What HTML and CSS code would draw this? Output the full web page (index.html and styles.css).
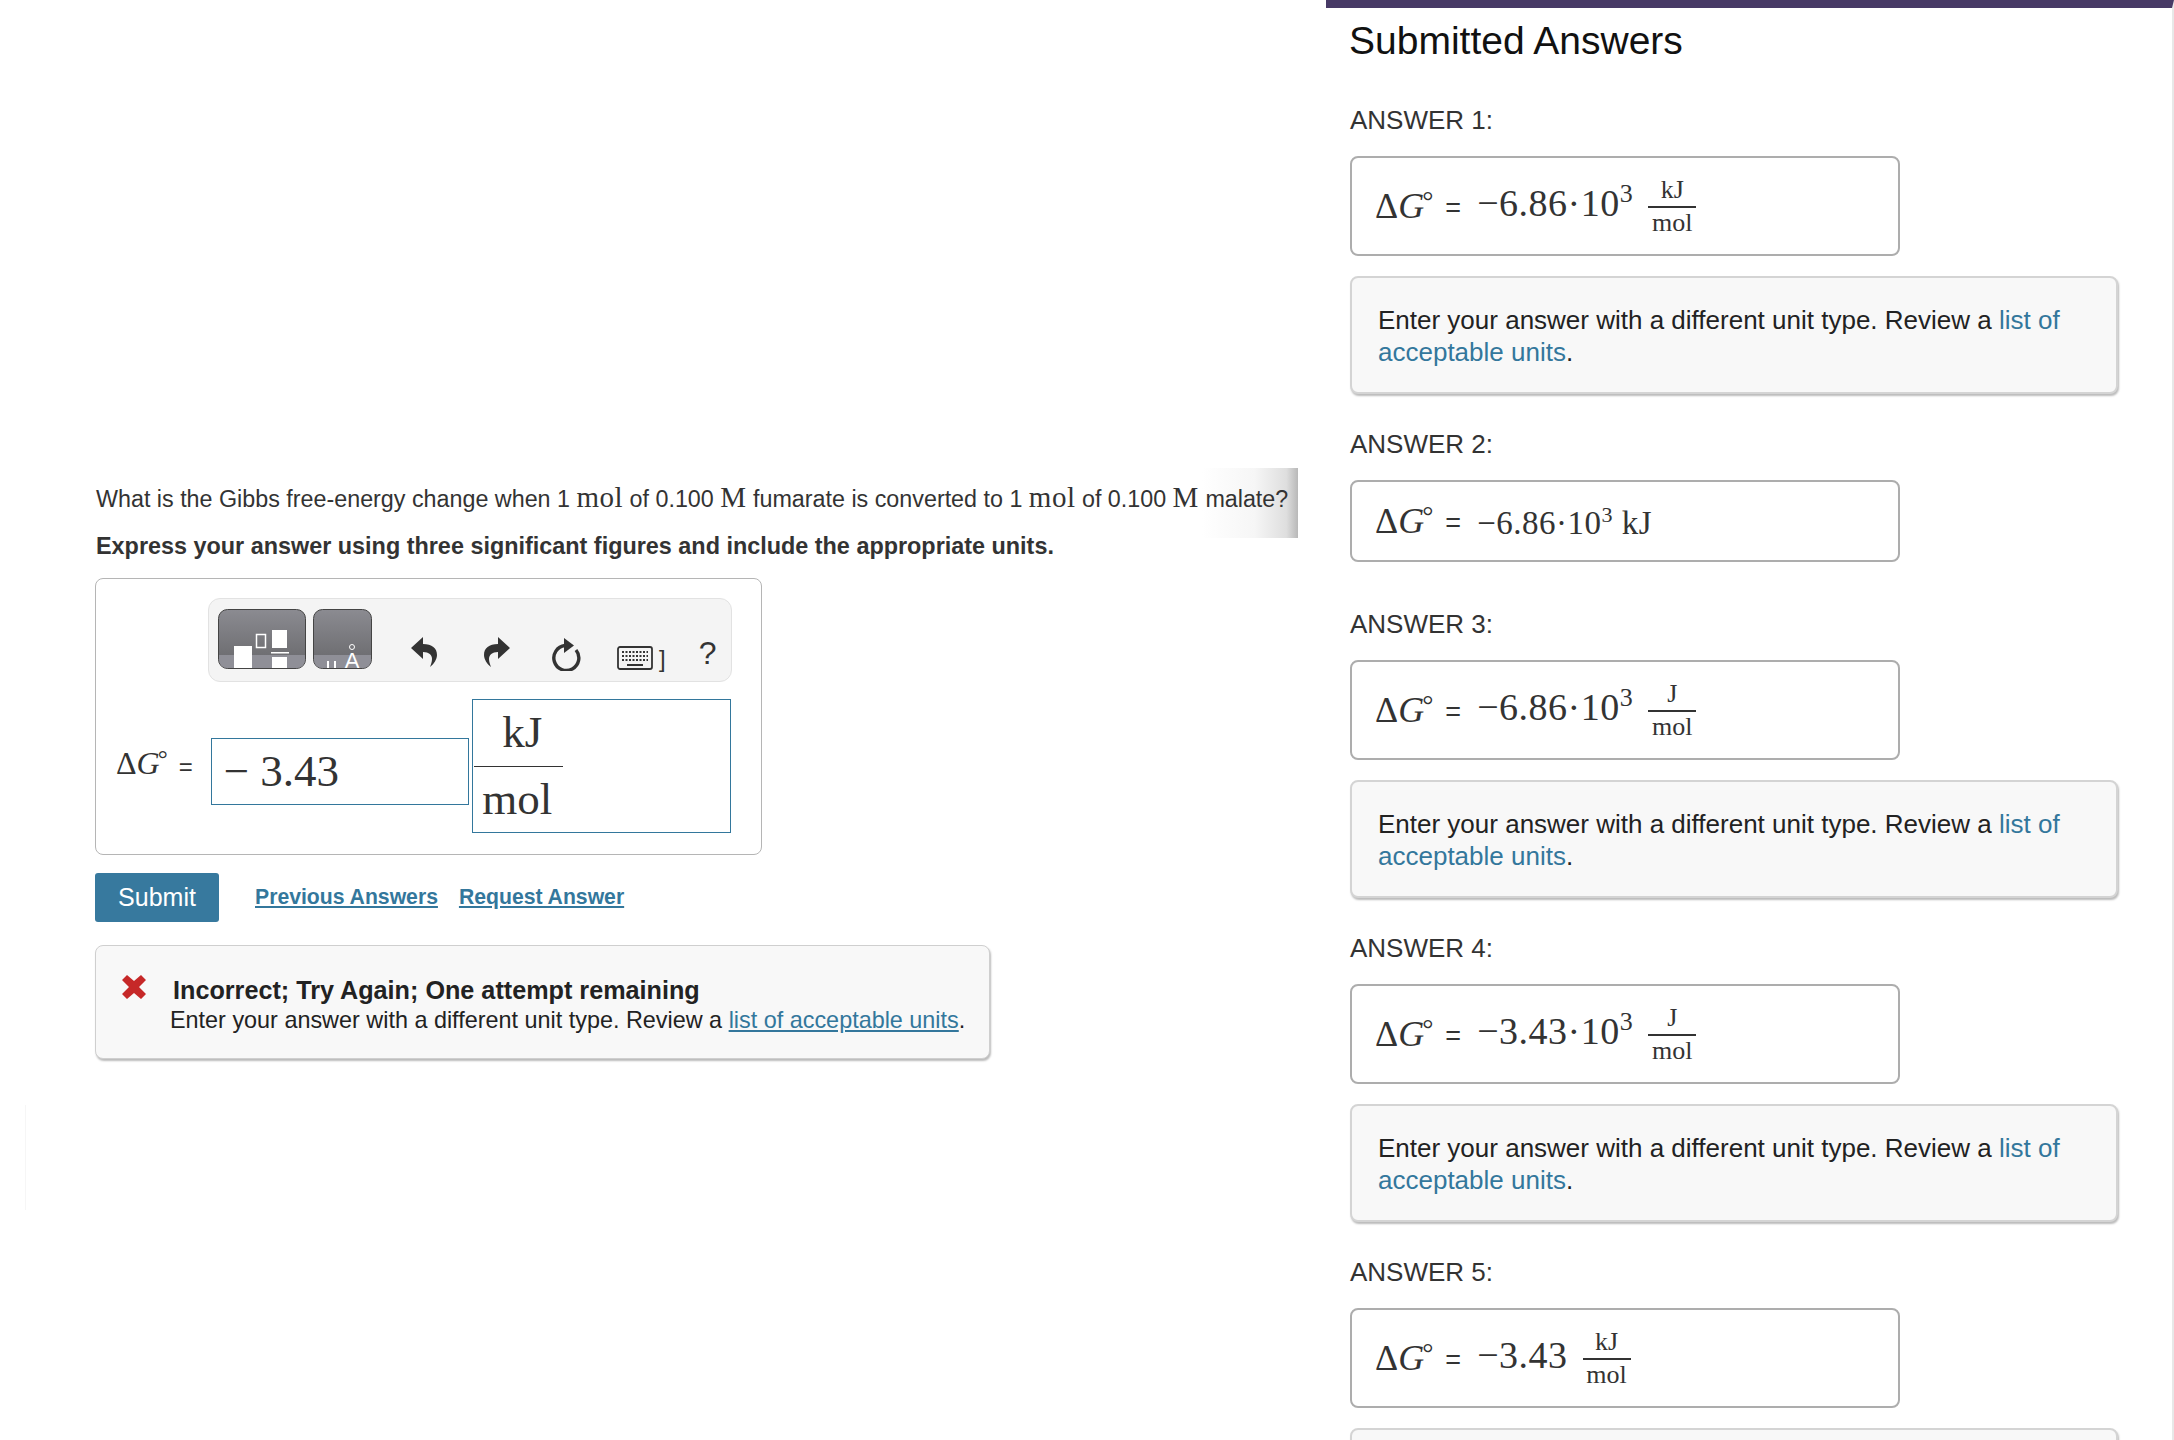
FILE: index.html
```html
<!DOCTYPE html>
<html lang="en">
<head>
  <meta charset="UTF-8">
  <meta name="viewport" content="width=device-width, initial-scale=1.0">
  <title>Submitted Answers</title>
  <link rel="stylesheet" href="styles.css">
</head>
<body>
  <div class="layout">
    <main class="problem">
      <div class="question-wrap">
        <span class="fade"></span>
        <p class="question">What is the Gibbs free-energy change when 1 <span class="unit">mol</span> of 0.100 <span class="unit">M</span> fumarate is converted to 1 <span class="unit">mol</span> of 0.100 <span class="unit">M</span> malate?</p>
      </div>
      <p class="instructions">Express your answer using three significant figures and include the appropriate units.</p>

      <div class="answer-panel">
        <div class="toolbar">
          <svg class="tpl tpl-wide" viewBox="0 0 88 60">
            <defs>
              <linearGradient id="tplGrad" x1="0" y1="0" x2="0" y2="1">
                <stop offset="0" stop-color="#8b8b91"/>
                <stop offset="1" stop-color="#67676a"/>
              </linearGradient>
            </defs>
            <rect x="0.5" y="0.5" width="87" height="59" rx="9" fill="url(#tplGrad)" stroke="#444"/>
            <path d="M1 46h86v5a8 8 0 0 1-8 8H9a8 8 0 0 1-8-8z" fill="#8f8f97"/>
            <rect x="16" y="37" width="18" height="22" fill="#fff"/>
            <rect x="38.500" y="25.500" width="9" height="13" fill="none" stroke="#fff" stroke-width="1.500"/>
            <rect x="54" y="21" width="15" height="18" fill="#fff"/>
            <rect x="53" y="43" width="18" height="1.500" fill="#fff"/>
            <rect x="54" y="48" width="15" height="11" fill="#fff"/>
          </svg>
          <svg class="tpl tpl-narrow" viewBox="0 0 59 60">
            <rect x="0.5" y="0.5" width="58" height="59" rx="9" fill="url(#tplGrad)" stroke="#444"/>
            <path d="M1 46h57v5a8 8 0 0 1-8 8H9a8 8 0 0 1-8-8z" fill="#8f8f97"/>
            <circle cx="39" cy="38" r="2.500" fill="none" stroke="#fff"/>
            <rect x="14" y="52" width="2" height="7" fill="#fff"/>
            <rect x="21" y="52" width="2" height="7" fill="#fff"/>
            <text x="39" y="59" text-anchor="middle" class="tpl-letter">A</text>
          </svg>
          <svg class="tool tool-undo" viewBox="0 0 26 30"><path d="M12 0 0 11l12 11v-7c6 0 9 3 9 7 0 3-1 5-2 8 4-3 7-8 7-12 0-7-5-11-14-11z" fill="#333"/></svg>
          <svg class="tool tool-redo" viewBox="0 0 26 30"><path d="M14 0l12 11-12 11v-7c-6 0-9 3-9 7 0 3 1 5 2 8-4-3-7-8-7-12 0-7 5-11 14-11z" fill="#333"/></svg>
          <svg class="tool tool-reset" viewBox="0 0 32 34"><path d="M26 13A12.500 12.500 0 1 1 15 8.500" fill="none" stroke="#333" stroke-width="3.400"/><path d="M14 1l10 7.500L14 16z" fill="#333"/></svg>
          <svg class="tool tool-keys" viewBox="0 0 36 24">
            <rect x="1" y="1" width="34" height="22" rx="2" fill="#f4f4f4" stroke="#333" stroke-width="1.800"/>
            <path d="M5 6h26M5 10h26M5 14h26" stroke="#333" stroke-width="2" stroke-dasharray="2 1.500"/>
            <path d="M10 19h16" stroke="#333" stroke-width="2"/>
          </svg>
          <span class="tool-bracket">]</span>
          <span class="tool-help">?</span>
        </div>
        <div class="entry-row">
          <span class="symbol"><span>&Delta;</span><i>G</i><sup>&deg;</sup></span>
          <span class="equals">=</span>
          <div class="entry-value">&minus; 3.43</div>
          <div class="entry-units">
            <div class="units-frac">
              <span class="units-top">kJ</span>
              <span class="units-bottom">mol</span>
            </div>
          </div>
        </div>
      </div>

      <div class="actions">
        <button class="submit">Submit</button>
        <a class="action-link" href="#">Previous Answers</a>
        <a class="action-link" href="#">Request Answer</a>
      </div>

      <div class="result">
        <svg class="result-icon" viewBox="0 0 26 24"><path d="M1 5 6 0l7 6 7-6 5 5-7 7 7 7-5 5-7-6-7 6-5-5 7-7z" fill="#c62828"/></svg>
        <div class="result-text">
          <div class="result-title">Incorrect; Try Again; One attempt remaining</div>
          <div class="result-body">Enter your answer with a different unit type. Review a <a href="#">list of acceptable units</a>.</div>
        </div>
      </div>
      <span class="edge-mark"></span>
    </main>

    <aside class="submitted">
      <h1>Submitted Answers</h1>

      <section class="answer">
        <h2>ANSWER 1:</h2>
        <div class="answer-box">
          <span class="symbol"><span>&Delta;</span><i>G</i><sup>&deg;</sup></span><span class="equals">=</span>
          <span class="value">&minus;6.86&middot;10<sup>3</sup></span>
          <span class="frac"><span>kJ</span><span>mol</span></span>
        </div>
        <div class="feedback">Enter your answer with a different unit type. Review a <a href="#">list of acceptable units</a>.</div>
      </section>

      <section class="answer">
        <h2>ANSWER 2:</h2>
        <div class="answer-box box-short">
          <span class="symbol"><span>&Delta;</span><i>G</i><sup>&deg;</sup></span><span class="equals">=</span>
          <span class="value value-small">&minus;6.86&middot;10<sup>3</sup> kJ</span>
        </div>
      </section>

      <section class="answer">
        <h2>ANSWER 3:</h2>
        <div class="answer-box">
          <span class="symbol"><span>&Delta;</span><i>G</i><sup>&deg;</sup></span><span class="equals">=</span>
          <span class="value">&minus;6.86&middot;10<sup>3</sup></span>
          <span class="frac"><span>J</span><span>mol</span></span>
        </div>
        <div class="feedback">Enter your answer with a different unit type. Review a <a href="#">list of acceptable units</a>.</div>
      </section>

      <section class="answer">
        <h2>ANSWER 4:</h2>
        <div class="answer-box">
          <span class="symbol"><span>&Delta;</span><i>G</i><sup>&deg;</sup></span><span class="equals">=</span>
          <span class="value">&minus;3.43&middot;10<sup>3</sup></span>
          <span class="frac"><span>J</span><span>mol</span></span>
        </div>
        <div class="feedback">Enter your answer with a different unit type. Review a <a href="#">list of acceptable units</a>.</div>
      </section>

      <section class="answer">
        <h2>ANSWER 5:</h2>
        <div class="answer-box">
          <span class="symbol"><span>&Delta;</span><i>G</i><sup>&deg;</sup></span><span class="equals">=</span>
          <span class="value">&minus;3.43</span>
          <span class="frac"><span>kJ</span><span>mol</span></span>
        </div>
        <div class="feedback">Enter your answer with a different unit type. Review a <a href="#">list of acceptable units</a>.</div>
      </section>
    </aside>
  </div>
</body>
</html>
```

FILE: styles.css
```css
html, body {
  margin: 0;
  height: 100%;
  overflow: hidden;
}

body {
  font-family: "Liberation Sans", Arial, sans-serif;
  color: #333;
  background-color: #fff;
}

a {
  color: #33779c;
}

.layout {
  display: flex;
  height: 1440px;
}

/* left column */

.problem {
  position: relative;
  box-sizing: border-box;
  width: 1326px;
  padding: 468px 0 0 96px;
}

.question-wrap {
  position: relative;
  height: 70px;
  display: flex;
  align-items: center;
}

.fade {
  position: absolute;
  left: 1106px;
  top: 0;
  width: 96px;
  height: 70px;
  background: linear-gradient(to right, #fff, #f6f6f6 55%, #dedede 88%, #b8b8b8);
}

.question {
  position: relative;
  margin: 0;
  font-size: 23.300px;
  white-space: nowrap;
  line-height: 30px;
  top: -5px;
}

.unit {
  font-family: "Liberation Serif", serif;
  font-size: 29px;
  letter-spacing: 0.5px;
}

.instructions {
  margin: -7px 0 0;
  font-size: 23.400px;
  line-height: 30px;
  font-weight: bold;
}

.answer-panel {
  box-sizing: border-box;
  width: 667px;
  height: 277px;
  margin: 17px 0 0 -1px;
  padding: 19px 30px 0 20px;
  border: 1px solid #b5b5b5;
  border-radius: 8px;
}

.toolbar {
  display: flex;
  align-items: flex-start;
  box-sizing: border-box;
  width: 524px;
  height: 84px;
  margin-left: 92px;
  padding: 10px 0 0 9px;
  background-color: #f4f4f4;
  border: 1px solid #e2e2e2;
  border-radius: 12px;
}

.tpl {
  display: block;
  height: 60px;
}

.tpl-wide {
  width: 88px;
}

.tpl-narrow {
  width: 59px;
  margin-left: 7px;
}

.tpl-letter {
  font-family: "Liberation Sans", sans-serif;
  font-size: 22px;
  fill: #fff;
}

.tool {
  display: block;
}

.tool-undo {
  width: 26px;
  height: 30px;
  margin: 28px 0 0 39px;
}

.tool-redo {
  width: 26px;
  height: 30px;
  margin: 28px 0 0 47px;
}

.tool-reset {
  width: 32px;
  height: 34px;
  margin: 28px 0 0 40px;
}

.tool-keys {
  width: 36px;
  height: 24px;
  margin: 37px 0 0 35px;
}

.tool-bracket {
  margin: 35px 0 0 6px;
  font-size: 24px;
  line-height: 30px;
}

.tool-help {
  margin: 26px 0 0 33px;
  font-size: 32px;
  line-height: 36px;
}

.entry-row {
  display: flex;
  align-items: center;
  margin-top: 17px;
  height: 134px;
}

.symbol {
  font-family: "Liberation Serif", serif;
  font-size: 36px;
  color: #333;
  white-space: nowrap;
}

.symbol sup {
  font-size: 28px;
  line-height: 0;
  vertical-align: 8px;
  margin-left: -2px;
}

.equals {
  font-size: 27px;
  margin: 4px 0 0 12px;
}

.entry-row .symbol {
  position: relative;
  top: -3px;
  font-size: 32px;
}

.entry-row .symbol sup {
  font-size: 25px;
  vertical-align: 7px;
}

.entry-row .equals {
  position: relative;
  top: 1px;
  font-size: 24px;
  margin: 0 0 0 11px;
}

.entry-value {
  box-sizing: border-box;
  width: 259px;
  height: 67px;
  margin: 10px 0 0 18px;
  padding-left: 12px;
  border: 1px solid #33779c;
  font-family: "Liberation Serif", serif;
  font-size: 45px;
  line-height: 65px;
}

.entry-units {
  box-sizing: border-box;
  width: 259px;
  height: 134px;
  margin-left: 3px;
  border: 1px solid #33779c;
  font-family: "Liberation Serif", serif;
  font-size: 45px;
}

.units-frac {
  display: flex;
  flex-direction: column;
  width: 89px;
  margin-left: 1px;
}

.units-top {
  height: 67px;
  line-height: 64px;
  padding-left: 28px;
  border-bottom: 1px solid #333;
  box-sizing: border-box;
}

.units-bottom {
  height: 65px;
  line-height: 64px;
  padding-left: 8px;
}

.actions {
  display: flex;
  align-items: center;
  height: 49px;
  margin: 18px 0 0 -1px;
}

.submit {
  width: 124px;
  height: 49px;
  padding: 0;
  margin-right: 36px;
  border: 0;
  border-radius: 3px;
  background-color: #37799e;
  color: #fff;
  font-family: inherit;
  font-size: 25px;
}

.action-link {
  margin: 0 21px 2px 0;
  font-size: 21.200px;
  font-weight: bold;
}

.result {
  box-sizing: border-box;
  display: flex;
  width: 895px;
  height: 114px;
  margin: 23px 0 0 -1px;
  padding: 29px 0 0 25px;
  background-color: #f8f8f8;
  border: 1px solid #cfcfcf;
  border-radius: 8px;
  box-shadow: 1px 2px 2px #bbb;
}

.result-icon {
  flex: none;
  width: 26px;
  height: 24px;
}

.result-text {
  margin-left: 23px;
}

.result-title {
  margin-left: 3px;
  font-size: 25.200px;
  line-height: 30px;
  font-weight: bold;
  color: #222;
}

.result-body {
  font-size: 23.400px;
  line-height: 30px;
  color: #222;
}

.edge-mark {
  position: absolute;
  left: 25px;
  top: 1105px;
  width: 1px;
  height: 105px;
  background-color: #f6f6f6;
}

/* right column */

.submitted {
  box-sizing: border-box;
  width: 848px;
  height: 1440px;
  overflow: hidden;
  padding: 0 0 0 24px;
  border-top: 8px solid #473a66;
  border-right: 2px solid #e8e8e8;
}

.submitted h1 {
  margin: 0 0 0 -1px;
  padding-top: 11px;
  font-size: 39px;
  line-height: 44px;
  font-weight: normal;
  color: #111;
}

.answer {
  display: flex;
  flex-direction: column;
  align-items: flex-start;
  padding-bottom: 35px;
}

.submitted h1 + .answer {
  margin-top: 42px;
}

.answer h2 {
  margin: 0 0 21px;
  font-size: 26px;
  line-height: 30px;
  font-weight: normal;
}

.answer-box {
  box-sizing: border-box;
  display: flex;
  align-items: center;
  width: 550px;
  height: 100px;
  margin-bottom: 13px;
  padding-left: 23px;
  border: 2px solid #adadad;
  border-radius: 8px;
}

.box-short {
  height: 82px;
  margin-bottom: 12px;
}

.value {
  margin: 0 0 6px 16px;
  font-family: "Liberation Serif", serif;
  font-size: 38px;
  letter-spacing: 0.500px;
  white-space: nowrap;
}

.value sup {
  font-size: 26px;
  line-height: 0;
  vertical-align: 14px;
}

.value-small {
  margin-top: 5px;
  margin-bottom: 0;
  font-size: 33px;
}

.value-small sup {
  font-size: 22px;
  vertical-align: 12px;
}

.frac {
  display: inline-flex;
  flex-direction: column;
  align-items: center;
  margin-left: 15px;
  font-family: "Liberation Serif", serif;
  font-size: 26px;
  line-height: 30px;
}

.frac span {
  min-width: 48px;
  text-align: center;
}

.frac span:first-child {
  border-bottom: 2px solid #333;
  padding-bottom: 1px;
}

.feedback {
  box-sizing: border-box;
  width: 768px;
  height: 118px;
  margin-top: 7px;
  padding: 26px 26px 0;
  background-color: #f8f8f8;
  border: 2px solid #d4d4d4;
  border-radius: 8px;
  box-shadow: 1px 2px 2px #bbb;
  font-size: 26px;
  line-height: 32px;
  color: #222;
}

.feedback a {
  text-decoration: none;
}
```
